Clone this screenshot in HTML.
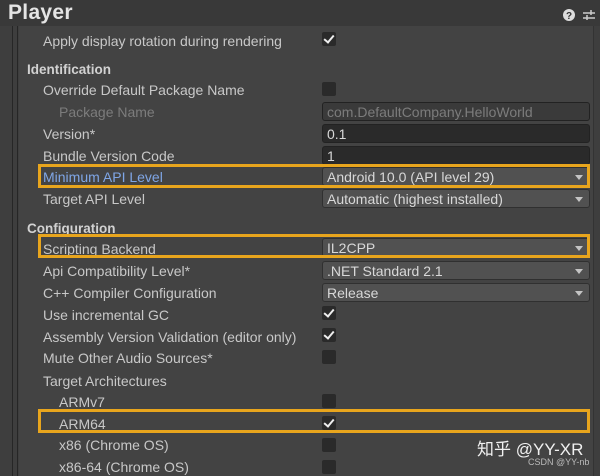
<!DOCTYPE html>
<html><head><style>
body{margin:0;width:600px;height:476px;overflow:hidden;background:#3e3e3e;font-family:"Liberation Sans","Noto Sans CJK SC",sans-serif;position:relative;color:#c8c8c8}
.hdr{position:absolute;left:0;top:0;width:600px;height:26px;background:#393939}
.title{position:absolute;left:8px;top:1px;font-size:21px;color:#e4e4e4;font-weight:bold;letter-spacing:0.3px}
.panel{position:absolute;left:19px;top:26px;width:574px;height:450px;background:#434343}
.vl{position:absolute;top:26px;width:1px;height:450px;background:#262626}
.t{position:absolute;font-size:14px;white-space:nowrap;line-height:16px}
.h{font-weight:bold;color:#d2d2d2;font-size:13.5px}
.cb{position:absolute;left:322px;width:14px;height:14px;background:#2a2a2a;border-radius:2px}
.cb.on::after{content:"";position:absolute;left:4px;top:1px;width:4px;height:8px;border:solid #eee;border-width:0 2px 2px 0;transform:rotate(40deg)}
.f{position:absolute;left:322px;width:268px;height:19px;background:#2a2a2a;border-radius:3px;font-size:14px;line-height:18px;padding-left:4px;box-sizing:border-box;color:#d8d8d8;border:1px solid #222}
.dd{background:#515151;border-color:#303030}
.dd::after{content:"";position:absolute;right:6px;top:7px;border:4px solid transparent;border-top:5px solid #c4c4c4;border-bottom:0}
.ob{position:absolute;left:38px;width:546px;height:18px;border:3px solid #e8a51d}
</style></head><body>
<div class="hdr"></div>
<div class="title">Player</div>
<svg style="position:absolute;left:563px;top:9px" width="12" height="12"><circle cx="6" cy="6" r="6" fill="#ddd"/><text x="6" y="10" font-size="10" font-weight="bold" text-anchor="middle" fill="#333" font-family="Liberation Sans">?</text></svg>
<svg style="position:absolute;left:583px;top:9px" width="12" height="12" stroke="#ccc" stroke-width="1.5"><path d="M0 4H12M0 9H12M8 1V6M4 6V11"/></svg>
<div class="panel"></div>
<div class="vl" style="left:12px"></div><div class="vl" style="left:17px"></div>
<div class="vl" style="left:593px;background:#333"></div>

<div class="t" style="left:43px;top:33px">Apply display rotation during rendering</div><div class="cb on" style="top:32px"></div>
<div class="t h" style="left:27px;top:62px">Identification</div>
<div class="t" style="left:43px;top:82px">Override Default Package Name</div><div class="cb" style="top:82px"></div>
<div class="t" style="left:59px;top:104px;color:#7c7c7c">Package Name</div><div class="f" style="top:102px;color:#7c7c7c;background:#3a3a3a">com.DefaultCompany.HelloWorld</div>
<div class="t" style="left:43px;top:126px">Version*</div><div class="f" style="top:124px">0.1</div>
<div class="t" style="left:43px;top:148px">Bundle Version Code</div><div class="f" style="top:146px">1</div>
<div class="t" style="left:43px;top:169px;color:#7fa6e6">Minimum API Level</div><div class="f dd" style="top:167px">Android 10.0 (API level 29)</div>
<div class="t" style="left:43px;top:191px">Target API Level</div><div class="f dd" style="top:189px">Automatic (highest installed)</div>
<div class="t h" style="left:27px;top:221px">Configuration</div>
<div class="t" style="left:43px;top:241px">Scripting Backend</div><div class="f dd" style="top:238px">IL2CPP</div>
<div class="t" style="left:43px;top:263px">Api Compatibility Level*</div><div class="f dd" style="top:261px">.NET Standard 2.1</div>
<div class="t" style="left:43px;top:285px">C++ Compiler Configuration</div><div class="f dd" style="top:283px">Release</div>
<div class="t" style="left:43px;top:307px">Use incremental GC</div><div class="cb on" style="top:306px"></div>
<div class="t" style="left:43px;top:329px">Assembly Version Validation (editor only)</div><div class="cb on" style="top:328px"></div>
<div class="t" style="left:43px;top:350px">Mute Other Audio Sources*</div><div class="cb" style="top:350px"></div>
<div class="t" style="left:43px;top:373px">Target Architectures</div>
<div class="t" style="left:59px;top:394px">ARMv7</div><div class="cb" style="top:394px"></div>
<div class="t" style="left:59px;top:416px">ARM64</div><div class="cb on" style="top:416px"></div>
<div class="t" style="left:59px;top:437px">x86 (Chrome OS)</div><div class="cb" style="top:438px"></div>
<div class="t" style="left:59px;top:459px">x86-64 (Chrome OS)</div><div class="cb" style="top:460px"></div>

<div class="ob" style="top:164px"></div>
<div class="ob" style="top:234px"></div>
<div class="ob" style="top:409px"></div>

<div class="t" style="left:477px;top:440px;font-size:17px;line-height:20px;color:#f0f0f0">知乎 @YY-XR</div>
<div class="t" style="left:528px;top:457px;font-size:9px;line-height:10px;color:#bbb">CSDN @YY-nb</div>
</body></html>
